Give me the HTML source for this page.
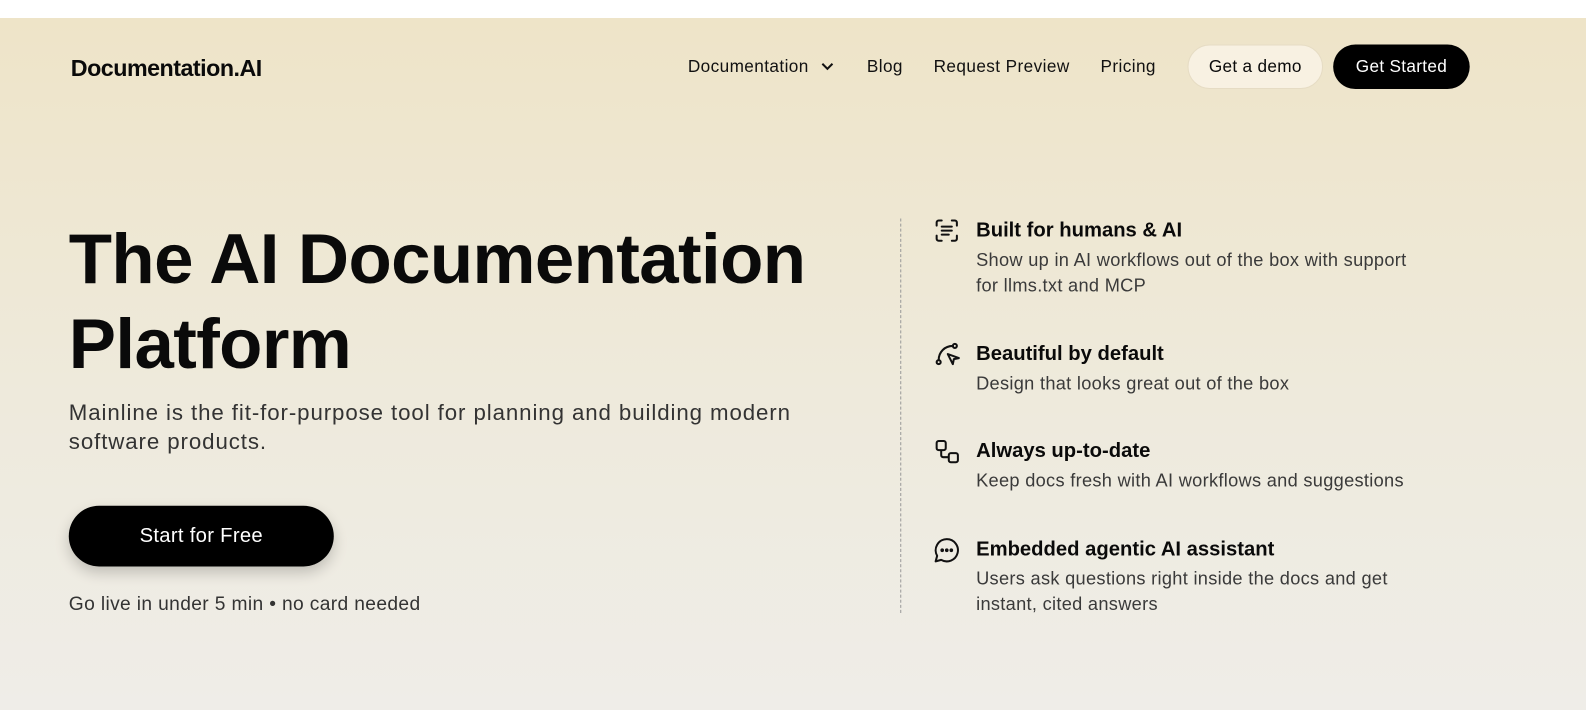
<!DOCTYPE html>
<html><head><meta charset="utf-8"><style>
*{margin:0;padding:0;box-sizing:border-box}
html,body{width:1586px;height:710px;overflow:hidden;background:#fff;font-family:"Liberation Sans",sans-serif;color:#0a0a0a}
.bg{position:absolute;top:18px;left:0;width:1586px;height:692px;background:linear-gradient(180deg,#eee4c8 0%,#eeeadc 55%,#efede8 100%)}
.wrap{position:absolute;left:0;top:0;width:1568px;height:702px;transform:scale(1.0115);transform-origin:0 0}
.abs{position:absolute}
.logo{left:70px;top:54px;font-size:23px;font-weight:bold;letter-spacing:-0.5px}
.nav{top:56px;font-size:17px;color:#111;letter-spacing:0.4px}
.btn{border-radius:22px;font-size:17px;display:flex;align-items:center;justify-content:center;letter-spacing:0.3px}
h1{position:absolute;left:68px;top:214px;font-size:70px;line-height:84px;font-weight:bold;letter-spacing:-0.6px}
.sub{left:68px;top:393px;font-size:22px;line-height:29px;color:#333;letter-spacing:0.9px}
.feat .t{font-size:20px;font-weight:bold;color:#0a0a0a}
.feat .d{font-size:18px;line-height:25px;color:#3a3a3a;margin-top:5px;letter-spacing:0.3px}
.feat{left:965px;width:470px}
svg{position:absolute}
</style></head><body>
<div class="bg"></div>
<div class="wrap">
<div class="abs logo">Documentation.AI</div>
<div class="abs nav" style="left:680px">Documentation</div>
<svg style="left:811px;top:60px" width="14" height="12" viewBox="0 0 14 12"><path d="M2 3l5 5 5-5" fill="none" stroke="#111" stroke-width="2"/></svg>
<div class="abs nav" style="left:857px">Blog</div>
<div class="abs nav" style="left:923px">Request Preview</div>
<div class="abs nav" style="left:1088px">Pricing</div>
<div class="abs btn" style="left:1174px;top:44px;width:134px;height:44px;background:#f8f1e2;border:1px solid #e6dcc4">Get a demo</div>
<div class="abs btn" style="left:1318px;top:44px;width:135px;height:44px;background:#000;color:#fff">Get Started</div>
<h1>The AI Documentation<br>Platform</h1>
<div class="abs sub">Mainline is the fit-for-purpose tool for planning and building modern<br>software products.</div>
<div class="abs btn" style="left:68px;top:500px;width:262px;height:60px;border-radius:30px;background:#000;color:#fff;font-size:20px;box-shadow:0 6px 14px rgba(0,0,0,.2)">Start for Free</div>
<div class="abs" style="left:68px;top:587px;font-size:19px;color:#333;letter-spacing:0.35px">Go live in under 5 min • no card needed</div>
<div class="abs" style="left:890px;top:216px;height:390px;border-left:1px dashed #999"></div>

<svg style="left:924px;top:216px" width="24" height="24" viewBox="0 0 24 24" fill="none" stroke="#111" stroke-width="2" stroke-linecap="round"><path d="M2 7V4a2 2 0 012-2h3M17 2h3a2 2 0 012 2v3M22 17v3a2 2 0 01-2 2h-3M7 22H4a2 2 0 01-2-2v-3M7 8h10M7 12h10M7 16h7"/></svg>
<div class="abs feat" style="top:217px"><div class="t">Built for humans &amp; AI</div><div class="d">Show up in AI workflows out of the box with support<br>for llms.txt and MCP</div></div>

<svg style="left:924px;top:338px" width="26" height="26" viewBox="0 0 26 26" fill="none" stroke="#111" stroke-width="2" stroke-linecap="round" stroke-linejoin="round"><circle cx="4" cy="20" r="2"/><circle cx="20" cy="4" r="2"/><path d="M4 18C4 10 10 4 18 4"/><path d="M13 12l11 4-5 1-1 5z"/></svg>
<div class="abs feat" style="top:339px"><div class="t">Beautiful by default</div><div class="d">Design that looks great out of the box</div></div>

<svg style="left:924px;top:434px" width="26" height="26" viewBox="0 0 26 26" fill="none" stroke="#111" stroke-width="2"><rect x="2" y="2" width="9" height="9" rx="2"/><rect x="14" y="14" width="9" height="9" rx="2"/><path d="M6.5 11v5a2 2 0 002 2h5.5"/></svg>
<div class="abs feat" style="top:435px"><div class="t">Always up-to-date</div><div class="d">Keep docs fresh with AI workflows and suggestions</div></div>

<svg style="left:923px;top:531px" width="26" height="26" viewBox="0 0 26 26" fill="none" stroke="#111" stroke-width="2"><path d="M13 2a11 11 0 11-5.5 20.5L2 24l1.5-5.5A11 11 0 0113 2z" stroke-linejoin="round"/><circle cx="8.5" cy="13" r=".8" fill="#111"/><circle cx="13" cy="13" r=".8" fill="#111"/><circle cx="17.5" cy="13" r=".8" fill="#111"/></svg>
<div class="abs feat" style="top:532px"><div class="t">Embedded agentic AI assistant</div><div class="d">Users ask questions right inside the docs and get<br>instant, cited answers</div></div>
</div>
</body></html>
